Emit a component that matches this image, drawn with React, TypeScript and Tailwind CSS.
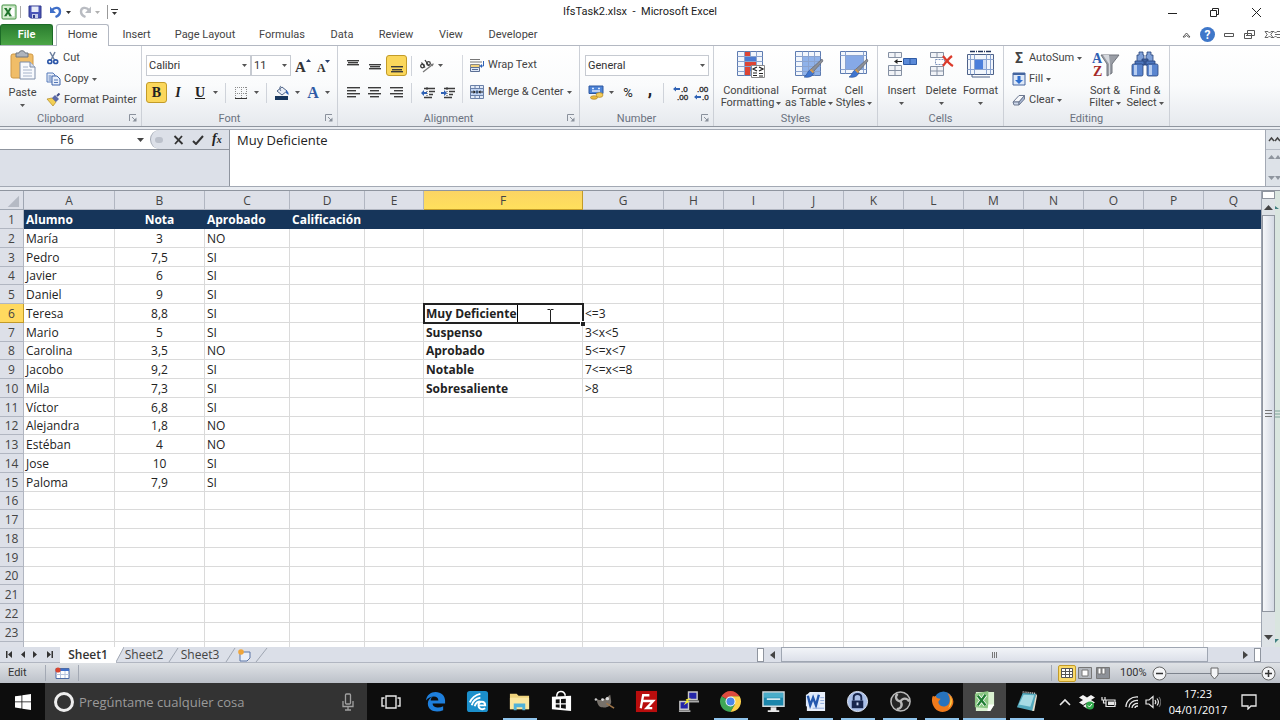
import type { ReactNode } from "react";
import clsx from "clsx";

interface RowData {
  cells: Record<string, string>;
}

const COLUMNS = [
  { name: "A", width: "w-[91px]" },
  { name: "B", width: "w-[90px]" },
  { name: "C", width: "w-[85px]" },
  { name: "D", width: "w-[75px]" },
  { name: "E", width: "w-[59px]" },
  { name: "F", width: "w-[159px]" },
  { name: "G", width: "w-[81px]" },
  { name: "H", width: "w-[60px]" },
  { name: "I", width: "w-[60px]" },
  { name: "J", width: "w-[60px]" },
  { name: "K", width: "w-[60px]" },
  { name: "L", width: "w-[60px]" },
  { name: "M", width: "w-[60px]" },
  { name: "N", width: "w-[60px]" },
  { name: "O", width: "w-[60px]" },
  { name: "P", width: "w-[60px]" },
  { name: "Q", width: "w-[60px]" },
];

const ROWS: RowData[] = [
  { cells: { A: "Alumno", B: "Nota", C: "Aprobado", D: "Calificación" } },
  { cells: { A: "María", B: "3", C: "NO" } },
  { cells: { A: "Pedro", B: "7,5", C: "SI" } },
  { cells: { A: "Javier", B: "6", C: "SI" } },
  { cells: { A: "Daniel", B: "9", C: "SI" } },
  { cells: { A: "Teresa", B: "8,8", C: "SI", F: "Muy Deficiente", G: "<=3" } },
  { cells: { A: "Mario", B: "5", C: "SI", F: "Suspenso", G: "3<x<5" } },
  { cells: { A: "Carolina", B: "3,5", C: "NO", F: "Aprobado", G: "5<=x<7" } },
  { cells: { A: "Jacobo", B: "9,2", C: "SI", F: "Notable", G: "7<=x<=8" } },
  { cells: { A: "Mila", B: "7,3", C: "SI", F: "Sobresaliente", G: ">8" } },
  { cells: { A: "Víctor", B: "6,8", C: "SI" } },
  { cells: { A: "Alejandra", B: "1,8", C: "NO" } },
  { cells: { A: "Estéban", B: "4", C: "NO" } },
  { cells: { A: "Jose", B: "10", C: "SI" } },
  { cells: { A: "Paloma", B: "7,9", C: "SI" } },
  ...Array.from({ length: 8 }, () => ({ cells: {} })),
];

const TABS = [
  { name: "Insert", width: "w-[55px]" },
  { name: "Page Layout", width: "w-[82px]" },
  { name: "Formulas", width: "w-[72px]" },
  { name: "Data", width: "w-[48px]" },
  { name: "Review", width: "w-[60px]" },
  { name: "View", width: "w-[50px]" },
  { name: "Developer", width: "w-[74px]" },
];

// ================================
// Small shared pieces
// ================================

function Arrow({ className = "text-[#555]" }: { className?: string }) {
  return (
    <svg viewBox="0 0 5 3" className={clsx("w-[5px] h-[3px] shrink-0", className)} fill="currentColor">
      <path d="M0 0h5L2.5 3z" />
    </svg>
  );
}

function Separator() {
  return <span className="w-px h-5 bg-[#cfd3da] shrink-0" />;
}

function Launcher() {
  return (
    <button aria-label="More options" className="absolute right-1 bottom-1">
      <svg viewBox="0 0 8 8" className="w-2 h-2" fill="none" stroke="#8a919c">
        <path d="M.5 7V.5H7M3 3l3 3" />
        <path d="M7.5 3.5v4h-4z" fill="#8a919c" stroke="none" />
      </svg>
    </button>
  );
}

interface GroupProps {
  label: string;
  width: string;
  launcher?: boolean;
  children: ReactNode;
}

function Group({ label, width, launcher, children }: GroupProps) {
  return (
    <section className={clsx("relative flex flex-col shrink-0 h-20 border-r border-[#ccd0d7]", width)}>
      <div className="flex-1 min-h-0">{children}</div>
      <h2 className={clsx("h-4 leading-[18px] text-center text-[#6a7280]", launcher && "pr-5")}>{label}</h2>
      {launcher && <Launcher />}
    </section>
  );
}

interface BigButtonProps {
  icon: ReactNode;
  lines: string[];
  width: string;
}

function BigButton({ icon, lines, width }: BigButtonProps) {
  return (
    <button className={clsx("flex flex-col items-center pt-1 shrink-0", width)}>
      {icon}
      <span className="mt-[7px] leading-3 whitespace-nowrap">{lines[0]}</span>
      <span className="flex items-center gap-0.5 h-3 leading-3 whitespace-nowrap">
        {lines[1]}
        <Arrow />
      </span>
    </button>
  );
}

interface SmallButtonProps {
  icon: ReactNode;
  label: string;
  arrow?: boolean;
}

function SmallButton({ icon, label, arrow }: SmallButtonProps) {
  return (
    <button className="flex items-center gap-[3px] h-5 whitespace-nowrap">
      {icon}
      <span className="pt-px">{label}</span>
      {arrow && <Arrow />}
    </button>
  );
}

interface ToolProps {
  label: string;
  width: string;
  active?: boolean;
  children: ReactNode;
}

function Tool({ label, width, active, children }: ToolProps) {
  return (
    <button
      aria-label={label}
      className={clsx(
        "flex items-center justify-center h-[21px] shrink-0",
        width,
        active && "rounded-[3px] border border-[#c29b29] bg-[#fbd75b]"
      )}
    >
      {children}
    </button>
  );
}

function Picker({ label, value, width }: { label: string; value: string; width: string }) {
  return (
    <span className={clsx("relative block shrink-0", width)}>
      <select
        aria-label={label}
        className="appearance-none w-full h-[21px] pl-0.5 pt-px bg-white border border-[#c6cad1] text-[#333]"
      >
        <option>{value}</option>
      </select>
      <Arrow className="absolute right-1 top-[9px] text-[#555]" />
    </span>
  );
}

// ================================
// Ribbon icons
// ================================

function SaveIcon() {
  return (
    <svg viewBox="0 0 14 14" className="w-3.5 h-3.5">
      <path d="M1 1h12v12H2.500L1 11.500z" fill="#4a55b8" stroke="#30398c" />
      <path d="M3.500 1.500h7V7h-7z" fill="#e8ecf8" />
      <path d="M4 9h6v4H4z" fill="#c6cdea" />
      <path d="M5 10h2v3H5z" fill="#30398c" />
    </svg>
  );
}

function CurlIcon({ className }: { className: string }) {
  return (
    <svg viewBox="0 0 14 14" className={clsx("w-[14px] h-[14px]", className)} fill="none" stroke="currentColor">
      <path d="M3 5c3-3.500 8-2.500 8 1.500 0 2.500-2 4.500-4.500 5.500" strokeWidth="2.400" />
      <path d="M1 1.500V8h6z" fill="currentColor" stroke="none" />
    </svg>
  );
}

function ExcelIcon() {
  return (
    <svg viewBox="0 0 16 16" className="w-4 h-4">
      <rect x="1" y="1" width="14" height="14" rx="1" fill="#d8efd2" stroke="#3f8f3f" />
      <path d="M9 3h5v10H9z" fill="#fff" stroke="#8cc08a" strokeWidth=".6" />
      <path d="M3 4h2.600L7 6.500 8.600 4h2.200L8.200 8l2.800 4.200H8.400L7 9.700l-1.600 2.500H3L5.800 8z" fill="#20742c" />
    </svg>
  );
}

function PasteIcon() {
  return (
    <svg viewBox="0 0 28 30" className="w-7 h-[30px]">
      <rect x="2" y="4" width="22" height="24" rx="2" fill="#f0bd68" stroke="#cf9845" />
      <path d="M7 3h3c0-3 6-3 6 0h3v4H7z" fill="#aeb4bd" stroke="#6f7680" />
      <path d="M11 12h10l5 5v12H11z" fill="#f7f9fd" stroke="#7d8ca8" />
      <path d="M21 12v5h5" fill="#d5ddeb" stroke="#7d8ca8" />
      <path d="M14 17h5M14 20h9M14 23h9M14 26h9" stroke="#a5b2c9" />
    </svg>
  );
}

function CutIcon() {
  return (
    <svg viewBox="0 0 14 14" className="w-3.5 h-3.5" fill="none">
      <path d="M4 1l4.500 8M9 1L5 9" stroke="#6c7f9e" strokeWidth="1.500" />
      <ellipse cx="3.800" cy="10.700" rx="2" ry="1.800" stroke="#2a55a8" strokeWidth="1.600" />
      <ellipse cx="9.700" cy="10.700" rx="2" ry="1.800" stroke="#2a55a8" strokeWidth="1.600" />
    </svg>
  );
}

function CopyIcon() {
  return (
    <svg viewBox="0 0 15 14" className="w-[15px] h-3.5">
      <path d="M1 1h6l2 2v7H1z" fill="#e9f0fb" stroke="#5578b8" />
      <path d="M6 4h5l3 3v6H6z" fill="#e9f0fb" stroke="#3d62a8" />
      <path d="M2.500 4h3M2.500 6h3M2.500 8h3M8 8h4M8 10.500h4" stroke="#5578b8" />
    </svg>
  );
}

function PainterIcon() {
  return (
    <svg viewBox="0 0 15 14" className="w-[15px] h-3.5">
      <path d="M1 6l5-1 4 4-3 4z" fill="#f2cf55" stroke="#b18a25" strokeWidth=".7" />
      <path d="M6 5l3-3 4 4-3 3z" fill="#5b6aa8" />
      <path d="M11 3l2.500-2.500" stroke="#434f86" strokeWidth="2" />
    </svg>
  );
}

function FontSizeIcon({ shrink }: { shrink?: boolean }) {
  return (
    <svg
      viewBox="0 0 16 16"
      className="w-4 h-4"
      fontFamily="Liberation Serif, serif"
      fontWeight="700"
      fontSize={shrink ? 12 : 15}
      fill="#333"
    >
      <text x={shrink ? 2 : 0} y="14">A</text>
      <path d={shrink ? "M10 2h5l-2.500 3z" : "M11 4h5l-2.500-3z"} fill="#27406e" />
    </svg>
  );
}

function BordersIcon() {
  return (
    <svg viewBox="0 0 14 14" className="w-3.5 h-3.5" stroke="#8c8c8c" strokeDasharray="1 1">
      <path d="M1 1.500h12M1 7.500h12M1.500 1v12M7.500 1v12M12.500 1v12" />
      <path d="M1 12.500h12" stroke="#333" strokeDasharray="none" />
    </svg>
  );
}

function FillColorIcon() {
  return (
    <svg viewBox="0 0 16 15" className="w-4 h-[15px]">
      <path d="M3 6l5-4 5 4-5 4z" fill="#e9eef7" stroke="#4f6487" />
      <path d="M7 1c-2 1-1 4 0 5" fill="none" stroke="#4f6487" />
      <path d="M12 5c2 1 3 3 2.500 5L12 8z" fill="#3567b8" />
      <path d="M1 11h13v4H1z" fill="#17365d" />
    </svg>
  );
}

interface LinesProps {
  rows: { x: number; y: number; w: number }[];
}

function Lines({ rows }: LinesProps) {
  return (
    <svg viewBox="0 0 14 14" className="w-3.5 h-3.5" fill="#3c3c3c">
      {rows.map((row) => (
        <rect key={row.y} x={row.x} y={row.y} width={row.w} height="1.4" />
      ))}
    </svg>
  );
}

function OrientationIcon() {
  return (
    <svg viewBox="0 0 16 14" className="w-4 h-3.5" fill="none" stroke="#3c3c3c" strokeWidth="1.300">
      <circle cx="3.500" cy="7" r="1.800" />
      <path d="M2.500 3.500l3.500 5M6 1l4 6" />
      <circle cx="9.500" cy="4.500" r="1.800" />
      <path d="M4 13l9-7" stroke="#777" />
      <path d="M15 4.500l-3.500.500 2 2.500z" fill="#777" stroke="none" />
    </svg>
  );
}

function IndentIcon({ flip }: { flip?: boolean }) {
  return (
    <svg viewBox="0 0 15 14" className="w-[15px] h-3.5">
      <path d="M3 2.500h11M8 5.500h6M8 8.500h4M3 11.500h8" stroke="#3c3c3c" strokeWidth="1.700" />
      <path d="M6 1v12" stroke="#3c3c3c" strokeDasharray="1 1" />
      <path d={flip ? "M0 6h3V4l3 3-3 3V8H0z" : "M6 6H3V4L0 7l3 3V8h3z"} fill="#2f62b5" />
    </svg>
  );
}

function WrapIcon() {
  return (
    <svg viewBox="0 0 16 16" className="w-4 h-4">
      <path d="M1 2.500h10M1 5h12" stroke="#777" strokeWidth="1.200" />
      <path d="M1.500 7.500h9v3h-9z" fill="#f3d27c" stroke="#888" />
      <path d="M1.500 10.500h9v4h-9z" fill="#dfe8f7" stroke="#5b6f95" />
      <path d="M3 12.500h6" stroke="#5b6f95" />
      <path d="M14.500 4v5H12" fill="none" stroke="#2f62b5" />
      <path d="M13 7v4l-2.500-2z" fill="#2f62b5" />
    </svg>
  );
}

function MergeIcon() {
  return (
    <svg viewBox="0 0 16 16" className="w-4 h-4">
      <path d="M1.500 1.500h13v13h-13z" fill="#e3ebf8" stroke="#6a80a8" />
      <path d="M6 1.500v3M10.500 1.500v3M6 11.500v3M10.500 11.500v3M1.500 4.500h13M1.500 11.500h13" stroke="#6a80a8" />
      <path d="M2 5h12v6H2z" fill="#c0d3f2" />
      <path d="M2 8h4M10 8h4" stroke="#222" />
      <path d="M4.500 6.200L7 8l-2.500 1.800zM11.500 6.200L9 8l2.500 1.800z" fill="#222" />
      <path d="M8 6.500v3" stroke="#17365d" strokeWidth="1.500" />
    </svg>
  );
}

function CurrencyIcon() {
  return (
    <svg viewBox="0 0 16 15" className="w-4 h-[15px]">
      <path d="M1 1h14v7.500H1z" fill="#4d83d6" stroke="#2c57a0" />
      <path d="M4 3.500h2M10 3.500h2M4 6h8" stroke="#dbe8ff" strokeWidth="1.400" />
      <ellipse cx="6" cy="12.500" rx="3.500" ry="1.800" fill="#eab93f" stroke="#a57714" strokeWidth=".6" />
      <ellipse cx="11.500" cy="10" rx="3.500" ry="2.400" fill="#f2cc5c" stroke="#a57714" strokeWidth=".6" />
    </svg>
  );
}

function DecimalIcon({ increase }: { increase?: boolean }) {
  return (
    <svg viewBox="0 0 16 16" className="w-4 h-4" fontFamily="Liberation Sans, sans-serif" fontSize="8" fill="#222" stroke="#222" strokeWidth=".3">
      <text x={increase ? 8 : 3} y="7">{increase ? ".0" : ".00"}</text>
      <text x={increase ? 4 : 8} y="15">{increase ? ".00" : ".0"}</text>
      <path d={increase ? "M0 4l3-2.500V3h4v2H3v1.500z" : "M0 12l3-2.500V11h4v2H3v1.500z"} fill="#2f62b5" stroke="none" />
    </svg>
  );
}

function GridBase({ fill }: { fill: string }) {
  return (
    <>
      <path d="M1.500 1.500h25v24h-25z" fill="#f2f6fc" stroke="#5d7bb0" />
      <path d="M8 6h18v19H8z" fill={fill} />
      <path d="M1.500 6.500h25M1.500 11.500h25M1.500 16.500h25M1.500 21.500h25M8.500 1.500v24M14.500 1.500v24M20.500 1.500v24" stroke="#8aa3cf" />
    </>
  );
}

function Brush() {
  return (
    <>
      <path d="M28 9L17 19l2.500 2.500L29 11z" fill="#8c8f96" stroke="#5a5d64" strokeWidth=".6" />
      <path d="M17 19l3 3c-1 5-6 6-10 5 3-1 3-6 7-8z" fill="#3f75cf" stroke="#2a4f95" strokeWidth=".6" />
      <path d="M16.500 19.500l3 3" stroke="#d59b4f" strokeWidth="2" />
    </>
  );
}

function ConditionalIcon() {
  return (
    <svg viewBox="0 0 30 28" className="w-[30px] h-7">
      <GridBase fill="#f2f6fc" />
      <path d="M9 2h5v4H9zM9 12h11v4H9z" fill="#dd4434" />
      <path d="M9 7h11v4H9zM9 17h6v4H9z" fill="#4b7bd2" />
      <path d="M9 17h5v8H9z" fill="#dd4434" />
      <path d="M15.500 15.500h13v12h-13z" fill="#fff" stroke="#888" />
      <path d="M21 17l-4 2 4 2M17 23h4M17 25.500h4M23 17l4 2-4 2M23 23.500h4M23 26h4" fill="none" stroke="#222" strokeWidth="1.200" />
    </svg>
  );
}

function TableStyleIcon() {
  return (
    <svg viewBox="0 0 30 28" className="w-[30px] h-7">
      <GridBase fill="#8fb2ea" />
      <Brush />
    </svg>
  );
}

function CellStyleIcon() {
  return (
    <svg viewBox="0 0 30 28" className="w-[30px] h-7">
      <path d="M1.500 1.500h26v22h-26z" fill="#f2f6fc" stroke="#5d7bb0" />
      <path d="M1.500 5.500h26M1.500 19.500h26M6.500 1.500v22M24.500 1.500v22" stroke="#8aa3cf" />
      <path d="M7 6h17v13H7z" fill="#86a9e6" />
      <Brush />
    </svg>
  );
}

function InsertCellsIcon() {
  return (
    <svg viewBox="0 0 30 28" className="w-[30px] h-7" fill="#f1f3f7" stroke="#8590a3">
      <path d="M1.500 2.500h13v5h-13zM8 2.500v5M1.500 15.500h13v10h-13zM8 15.500v10M1.500 20.500h13" />
      <path d="M16.500 8.500h13v6h-13z" fill="#5b8ad8" stroke="#2f5ba5" />
      <path d="M23 8.500v6" stroke="#2f5ba5" />
      <path d="M8 11.500h7" stroke="#222" />
      <path d="M7 11.500L10.500 9v5z" fill="#222" stroke="none" />
    </svg>
  );
}

function DeleteCellsIcon() {
  return (
    <svg viewBox="0 0 30 28" className="w-[30px] h-7" fill="#f1f3f7" stroke="#8590a3">
      <path d="M4.500 2.500h13v5h-13zM11 2.500v5M4.500 16.500h13v9h-13zM11 16.500v9M4.500 21h13" />
      <path d="M9.500 9.500h9v5h-9z" fill="none" stroke="#7d93bd" strokeDasharray="2 1" />
      <path d="M17 6c3 4 6 8 10 10M26 6c-4 3-6 6-9 10" fill="none" stroke="#dc3b2c" strokeWidth="2.200" />
    </svg>
  );
}

function FormatCellsIcon() {
  return (
    <svg viewBox="0 0 30 28" className="w-[30px] h-7">
      <path d="M4 1.500h22" stroke="#22345c" strokeDasharray="5 1 1 1" strokeWidth="1.500" />
      <path d="M1.500 4.500h26v20h-26z" fill="#f2f6fc" stroke="#4d6188" />
      <path d="M1.500 9.500h26M1.500 19.500h26M8.500 4.500v20M20.500 4.500v20M24.500 4.500v20M4.500 4.500v20" stroke="#8aa3cf" />
      <path d="M9 10h8v9H9z" fill="#4b7fdb" />
      <path d="M17 10h3v9h-3z" fill="#cddcf5" />
      <path d="M6 24v3h18" fill="none" stroke="#4d6188" />
    </svg>
  );
}

function FillDownIcon() {
  return (
    <svg viewBox="0 0 14 14" className="w-3.5 h-3.5">
      <path d="M1 1h12v12H1z" fill="#dfe9f8" stroke="#44659f" />
      <path d="M1 1h12v2H1z" fill="#44659f" />
      <path d="M5.500 4h3v4H11l-4 4-4-4h2.500z" fill="#2f6fd0" />
    </svg>
  );
}

function EraserIcon() {
  return (
    <svg viewBox="0 0 14 12" className="w-3.5 h-3">
      <path d="M1 8l6-6.500h5.500L7 8z" fill="#f7f8fb" stroke="#6c7890" />
      <path d="M1 8h6v3H2z" fill="#cfd9ec" stroke="#6c7890" />
      <path d="M7 8l5.500-6.500V5L7 11z" fill="#a9b8d3" stroke="#6c7890" />
    </svg>
  );
}

function SortIcon() {
  return (
    <svg viewBox="0 0 30 28" className="w-[30px] h-7" fontFamily="Liberation Serif, serif" fontWeight="700">
      <path d="M11 5h18l-7 9v9l-5 3V14z" fill="#9a9ea6" stroke="#70747c" />
      <path d="M13 5h6l1 9v11l-1 .5V14z" fill="#d5d8dd" />
      <text x="2" y="13" fontSize="14" fill="#2f5fb3">A</text>
      <text x="3" y="26" fontSize="14" fill="#a52828">Z</text>
    </svg>
  );
}

function FindIcon() {
  return (
    <svg viewBox="0 0 28 28" className="w-7 h-7" stroke="#274278" strokeWidth=".8">
      <path d="M8 2h4v3h1v7H6V5h2zM16 2h4v3h2v7h-7V5h1z" fill="#7fa0d8" />
      <path d="M11 9h6v6h-6z" fill="#3c5f9f" />
      <path d="M4 11h9v4H4zM15 11h9v4h-9z" fill="#4d76bd" />
      <rect x="1" y="14" width="11" height="12" rx="1.500" fill="#5a85cf" />
      <rect x="16" y="14" width="11" height="12" rx="1.500" fill="#5a85cf" />
      <path d="M3 15h3v10H3zM18 15h3v10h-3z" fill="#b7cdf0" stroke="none" />
    </svg>
  );
}

// ================================
// Window chrome
// ================================

function TitleBar() {
  return (
    <header className="grid grid-cols-[1fr_auto_1fr] items-center h-6 bg-white">
      <div className="flex items-center gap-[3px] pl-px">
        <ExcelIcon />
        <span className="w-px h-3 bg-[#aaa]" />
        <button aria-label="Save" className="ml-1"><SaveIcon /></button>
        <button aria-label="Undo" className="ml-1"><CurlIcon className="text-[#3f6fc9]" /></button>
        <Arrow className="text-[#333]" />
        <button aria-label="Redo" className="ml-1"><CurlIcon className="text-[#b9bcc2] -scale-x-100" /></button>
        <Arrow className="text-[#b0b0b0]" />
        <span className="w-px h-3.5 ml-1 bg-[#999]" />
        <button aria-label="Customize toolbar" className="flex flex-col items-center gap-0.5">
          <span className="w-[7px] h-px bg-[#333]" />
          <Arrow className="text-[#333]" />
        </button>
      </div>
      <h1 className="text-[11px] text-[#222]">IfsTask2.xlsx&nbsp; -&nbsp; Microsoft Excel</h1>
      <div className="flex justify-end gap-[31px] pr-[18px]">
        <button aria-label="Minimize">
          <svg viewBox="0 0 11 11" className="w-[11px] h-[11px]" stroke="#222"><path d="M1 6.500h9" /></svg>
        </button>
        <button aria-label="Restore">
          <svg viewBox="0 0 11 11" className="w-[11px] h-[11px]" fill="none" stroke="#222">
            <path d="M1.500 3.500h6v6h-6zM3.500 3V1.500h6v6H8" />
          </svg>
        </button>
        <button aria-label="Close">
          <svg viewBox="0 0 11 11" className="w-[11px] h-[11px]" stroke="#222"><path d="M1 1l9 9M10 1l-9 9" /></svg>
        </button>
      </div>
    </header>
  );
}

function TabBar() {
  return (
    <nav className="flex items-end h-[22px] bg-white border-b border-[#b3b8c2]">
      <button className="w-[53px] h-[21px] rounded-t-[3px] border border-b-0 border-[#1c6b27] bg-linear-to-b from-[#2a7d2f] to-[#4ba546] text-white font-semibold">
        File
      </button>
      <button className="w-[53px] h-[22px] ml-[3px] -mb-px rounded-t-[3px] border border-b-0 border-[#b3b8c2] bg-white">
        Home
      </button>
      {TABS.map((tab) => (
        <button key={tab.name} className={clsx("h-[21px] pt-0.5 shrink-0", tab.width)}>
          {tab.name}
        </button>
      ))}
      <div className="flex items-center gap-[9px] h-[21px] ml-auto">
        <svg viewBox="0 0 9 8" className="w-[9px] h-2" fill="none" stroke="#555"><path d="M1 6l3.500-4L8 6H6.500L4.500 4.500 2.500 6z" /></svg>
        <button aria-label="Help" className="flex items-center justify-center w-[15px] h-[15px] rounded-full bg-[#3f77c9] text-white text-xs font-bold">
          ?
        </button>
        <svg viewBox="0 0 11 8" className="w-[11px] h-2" fill="#fff" stroke="#555"><path d="M.5 2.500h9v3h-9z" /></svg>
        <svg viewBox="0 0 11 11" className="w-[11px] h-[11px]" fill="#fff" stroke="#555">
          <path d="M3.500 1.500h7v5h-7zM.5 4.500h7v5h-7z" />
          <path d="M2 6.500h4" />
        </svg>
        <svg viewBox="0 0 16 9" className="w-4 h-[9px]" fill="none" stroke="#666">
          <path d="M1 1.500h3l1.500 1.500L7 1.500h2L6.800 4.500 9 7.500H7L5.500 6 4 7.500H1l2.200-3zM9 1.500l1 0 1.500 1.500L13 1.500h3M9 7.500h1L11.500 6 13 7.500h3M11 4.500h5" />
        </svg>
      </div>
    </nav>
  );
}

function Ribbon() {
  return (
    <div className="flex h-[81px] bg-linear-to-b from-white via-[#fafbfc] to-[#e6e9ee] border-b border-[#8f959f] overflow-hidden">
      <Group label="Clipboard" width="w-[142px]" launcher>
        <div className="flex">
          <BigButton icon={<PasteIcon />} lines={["Paste"]} width="w-[45px]" />
          <div className="flex flex-col gap-px pt-0.5 pl-px">
            <SmallButton icon={<CutIcon />} label="Cut" />
            <SmallButton icon={<CopyIcon />} label="Copy" arrow />
            <SmallButton icon={<PainterIcon />} label="Format Painter" />
          </div>
        </div>
      </Group>

      <Group label="Font" width="w-[196px]" launcher>
        <div className="flex flex-col gap-1.5 pt-[9px] pl-1">
          <div className="flex">
            <Picker label="Font name" value="Calibri" width="w-[105px]" />
            <Picker label="Font size" value="11" width="w-10" />
            <span className="w-0.5" />
            <Tool label="Grow font" width="w-5"><FontSizeIcon /></Tool>
            <Tool label="Shrink font" width="w-5"><FontSizeIcon shrink /></Tool>
          </div>
          <div className="flex items-center font-['Liberation_Serif',serif] text-sm font-bold text-[#222]">
            <Tool label="Bold" width="w-[21px]" active>B</Tool>
            <Tool label="Italic" width="w-[22px]"><i>I</i></Tool>
            <Tool label="Underline" width="w-[22px]"><u>U</u></Tool>
            <Tool label="Underline styles" width="w-2"><Arrow /></Tool>
            <span className="w-1.5" />
            <Separator />
            <span className="w-1.5" />
            <Tool label="Borders" width="w-[18px]"><BordersIcon /></Tool>
            <Tool label="Border styles" width="w-3"><Arrow /></Tool>
            <span className="w-1" />
            <Separator />
            <span className="w-1.5" />
            <Tool label="Fill color" width="w-[18px]"><FillColorIcon /></Tool>
            <Tool label="Fill colors" width="w-3"><Arrow /></Tool>
            <Tool label="Font color" width="w-5"><span className="text-[#2f5ba5] text-base">A</span></Tool>
            <Tool label="Font colors" width="w-2"><Arrow /></Tool>
          </div>
        </div>
      </Group>

      <Group label="Alignment" width="w-[242px]" launcher>
        <div className="flex pt-[9px] pl-1">
          <div className="flex flex-col gap-1.5">
            <div className="flex items-center">
              <Tool label="Top align" width="w-[22px]">
                <Lines rows={[{ x: 1, y: 1, w: 12 }, { x: 2, y: 3, w: 10 }, { x: 1, y: 5, w: 12 }]} />
              </Tool>
              <Tool label="Middle align" width="w-[22px]">
                <Lines rows={[{ x: 1, y: 5, w: 12 }, { x: 2, y: 7, w: 10 }, { x: 1, y: 9, w: 12 }]} />
              </Tool>
              <Tool label="Bottom align" width="w-[21px]" active>
                <Lines rows={[{ x: 1, y: 7, w: 12 }, { x: 2, y: 10, w: 10 }, { x: 1, y: 12, w: 12 }]} />
              </Tool>
              <span className="w-1" />
              <Separator />
              <span className="w-1.5" />
              <Tool label="Orientation" width="w-[18px]"><OrientationIcon /></Tool>
              <Tool label="Orientation options" width="w-2"><Arrow /></Tool>
            </div>
            <div className="flex items-center">
              <Tool label="Align left" width="w-[22px]">
                <Lines rows={[{ x: 1, y: 1, w: 13 }, { x: 1, y: 4, w: 9 }, { x: 1, y: 7, w: 13 }, { x: 1, y: 10, w: 9 }]} />
              </Tool>
              <Tool label="Center" width="w-[22px]">
                <Lines rows={[{ x: 0, y: 1, w: 13 }, { x: 2, y: 4, w: 9 }, { x: 0, y: 7, w: 13 }, { x: 2, y: 10, w: 9 }]} />
              </Tool>
              <Tool label="Align right" width="w-[21px]">
                <Lines rows={[{ x: 0, y: 1, w: 13 }, { x: 4, y: 4, w: 9 }, { x: 0, y: 7, w: 13 }, { x: 4, y: 10, w: 9 }]} />
              </Tool>
              <span className="w-1" />
              <Separator />
              <span className="w-1.5" />
              <Tool label="Decrease indent" width="w-5"><IndentIcon /></Tool>
              <Tool label="Increase indent" width="w-5"><IndentIcon flip /></Tool>
            </div>
          </div>
          <span className="w-px h-12 ml-1 mr-1.5 bg-[#d5d8de]" />
          <div className="flex flex-col gap-[7px]">
            <SmallButton icon={<WrapIcon />} label="Wrap Text" />
            <SmallButton icon={<MergeIcon />} label="Merge & Center" arrow />
          </div>
        </div>
      </Group>

      <Group label="Number" width="w-[134px]" launcher>
        <div className="flex flex-col gap-1.5 pt-[9px] pl-[5px]">
          <Picker label="Number format" value="General" width="w-[124px]" />
          <div className="flex items-center text-[13px] text-[#222]">
            <Tool label="Accounting format" width="w-[22px]"><CurrencyIcon /></Tool>
            <Tool label="Currencies" width="w-2"><Arrow /></Tool>
            <Tool label="Percent" width="w-[26px]">%</Tool>
            <Tool label="Comma" width="w-[18px]"><span className="text-lg leading-3 font-bold pb-2">,</span></Tool>
            <span className="w-1" />
            <Separator />
            <span className="w-1.5" />
            <Tool label="Increase decimal" width="w-[21px]"><DecimalIcon increase /></Tool>
            <Tool label="Decrease decimal" width="w-[21px]"><DecimalIcon /></Tool>
          </div>
        </div>
      </Group>

      <Group label="Styles" width="w-[164px]">
        <div className="flex pl-1">
          <BigButton icon={<ConditionalIcon />} lines={["Conditional", "Formatting"]} width="w-[66px]" />
          <BigButton icon={<TableStyleIcon />} lines={["Format", "as Table"]} width="w-[50px]" />
          <BigButton icon={<CellStyleIcon />} lines={["Cell", "Styles"]} width="w-10" />
        </div>
      </Group>

      <Group label="Cells" width="w-[126px]">
        <div className="flex pl-1">
          <BigButton icon={<InsertCellsIcon />} lines={["Insert"]} width="w-[39px]" />
          <BigButton icon={<DeleteCellsIcon />} lines={["Delete"]} width="w-10" />
          <BigButton icon={<FormatCellsIcon />} lines={["Format"]} width="w-[39px]" />
        </div>
      </Group>

      <Group label="Editing" width="w-[166px]">
        <div className="flex pl-2">
          <div className="flex flex-col gap-px w-[73px] pt-0.5">
            <SmallButton icon={<span className="w-3.5 text-center font-bold text-sm">Σ</span>} label="AutoSum" arrow />
            <SmallButton icon={<FillDownIcon />} label="Fill" arrow />
            <SmallButton icon={<EraserIcon />} label="Clear" arrow />
          </div>
          <BigButton icon={<SortIcon />} lines={["Sort &", "Filter"]} width="w-10" />
          <BigButton icon={<FindIcon />} lines={["Find &", "Select"]} width="w-10" />
        </div>
      </Group>
    </div>
  );
}

function FormulaBar() {
  return (
    <div className="flex mt-0.5 h-[58px] border-y border-[#a3a9b4] bg-[#dce0e8]">
      <div className="w-[229px] shrink-0">
        <div className="flex items-center h-5 border-b border-[#8f959f] bg-white">
          <input
            aria-label="Name box"
            defaultValue="F6"
            className="w-[134px] h-full pt-px text-center text-xs text-[#333] outline-none"
          />
          <button aria-label="Names" className="flex items-center w-4 h-full pl-[3px]">
            <svg viewBox="0 0 7 4" className="w-[7px] h-1" fill="#444"><path d="M0 0h7L3.500 4z" /></svg>
          </button>
          <div className="flex items-center flex-1 h-full pl-1 gap-2 rounded-l-full border-l border-[#a3a9b4] bg-[#dce0e8]">
            <span className="w-2 h-1.5 mr-0.5 rounded-sm bg-[#bcc1cb]" />
            <button aria-label="Cancel">
              <svg viewBox="0 0 11 10" className="w-[11px] h-2.5" stroke="#333" strokeWidth="1.800"><path d="M1.500 1l8 8M9 1L2 9" /></svg>
            </button>
            <button aria-label="Enter">
              <svg viewBox="0 0 12 10" className="w-3 h-2.5" fill="none" stroke="#333" strokeWidth="2"><path d="M1 6l3 3 7-8" /></svg>
            </button>
            <button aria-label="Insert function" className="font-['Liberation_Serif',serif] font-bold italic text-sm leading-4 text-[#222]">
              f<span className="text-[10px]">x</span>
            </button>
          </div>
        </div>
      </div>
      <textarea
        aria-label="Formula"
        defaultValue="Muy Deficiente"
        className="flex-1 min-w-0 h-full pl-[7px] pt-px bg-white border-l border-[#8f959f] resize-none outline-none font-['Open_Sans',sans-serif] text-[13px] leading-[19px] text-[#222]"
      />
      <div className="flex flex-col items-center w-[15px] shrink-0 border-l border-[#a3a9b4] bg-[#dde2e8]">
        <svg viewBox="0 0 15 56" className="w-[15px] h-14">
          <path d="M0 19.500h15" stroke="#b6bcc6" />
          <path d="M3 11l2.500-3L8 11M9 11l2.500-3L14 11" fill="none" stroke="#444" strokeWidth="1.500" />
          <path d="M2 29l3.500-4L9 29zM9 29l3-4 3 4zM2 46l3.500 4L9 46zM9 46l3 4 3-4z" fill="#8e959e" />
        </svg>
      </div>
    </div>
  );
}

// ================================
// Worksheet
// ================================

function EditingCell({ text }: { text: string }) {
  return (
    <div className="relative">
      <span className="border-r border-black">{text}</span>
      <span className="absolute -left-[3px] -top-0.5 w-[161px] h-[21px] border-2 border-[#222]" />
      <span className="absolute left-[154px] top-4 w-[5px] h-[5px] bg-[#222] border-l border-t border-white" />
      <svg viewBox="0 0 7 14" className="absolute left-[121px] top-1 w-[7px] h-3.5" fill="none" stroke="#222">
        <path d="M.5.500H3l.5.500.5-.500h2.500M3.500 1v12M.5 13.500h6" />
      </svg>
    </div>
  );
}

function Sheet() {
  return (
    <div className="flex mt-[3px] border-t border-[#8f959f]">
      <div className="flex-1 min-w-0 overflow-hidden bg-white">
        <table className="table-fixed w-0 min-w-full border-separate border-spacing-0 font-['Open_Sans',sans-serif] text-xs text-[#222]">
          <colgroup>
            <col className="w-6" />
            {COLUMNS.map((col) => (
              <col key={col.name} className={col.width} />
            ))}
          </colgroup>
          <thead>
            <tr className="h-[19px] bg-[#dde0e8] text-[#444]">
              <th aria-label="Select all" className="p-0 border-r border-b border-[#9fa6b2]">
                <svg viewBox="0 0 24 18" className="block w-[23px] h-[17px]"><path d="M20 4v12H8z" fill="#b5bac4" /></svg>
              </th>
              {COLUMNS.map((col) => (
                <th
                  key={col.name}
                  scope="col"
                  className={clsx(
                    "px-0 pt-px pb-0 font-normal leading-[17px] border-r border-b",
                    col.name === "F"
                      ? "bg-linear-to-b from-[#fbd463] to-[#ffe05c] border-[#c29b29]"
                      : "border-[#b1b6c1]"
                  )}
                >
                  {col.name}
                </th>
              ))}
            </tr>
          </thead>
          <tbody>
            {ROWS.map((row, index) => {
              const number = index + 1;
              const isTitle = number === 1;
              return (
                <tr key={number} className="h-[19px] nth-[4n]:h-[18px]">
                  <th
                    scope="row"
                    className={clsx(
                      "p-0 font-normal leading-[17px] border-r border-b text-[#444]",
                      number === 6 ? "bg-[#ffd95f] border-[#c29b29]" : "bg-[#dde0e8] border-[#b1b6c1]"
                    )}
                  >
                    {number}
                  </th>
                  {COLUMNS.map((col) => {
                    const text = row.cells[col.name];
                    return (
                      <td
                        key={col.name}
                        className={clsx(
                          "py-0 leading-[17px] whitespace-nowrap border-r border-b",
                          isTitle ? "bg-[#16355a] border-[#16355a] text-white" : "border-[#dadada]",
                          col.name === "B" ? "px-0 text-center" : "pl-0.5 pr-0",
                          (isTitle || col.name === "F") && "font-bold"
                        )}
                      >
                        {number === 6 && col.name === "F" ? <EditingCell text={text} /> : text}
                      </td>
                    );
                  })}
                </tr>
              );
            })}
            <tr className="h-[5px]">
              <th aria-label="24" className="p-0 bg-[#dde0e8] border-r border-[#b1b6c1]" />
              {COLUMNS.map((col) => (
                <td key={col.name} className="p-0 border-r border-[#dadada]" />
              ))}
            </tr>
          </tbody>
        </table>
      </div>
      <div className="flex w-[19px] shrink-0 border-l border-[#9fa6b2] bg-[#dde2e6]">
        <div className="flex flex-col items-center w-[13px]">
          <span className="w-full h-2 border border-[#8f959f] bg-white" />
          <button aria-label="Scroll up" className="flex items-center justify-center h-4">
            <svg viewBox="0 0 9 5" className="w-[9px] h-[5px]" fill="#444"><path d="M0 5h9L4.500 0z" /></svg>
          </button>
          <div className="flex flex-col justify-center gap-0.5 flex-1 w-full px-0.5 border border-[#8f959f] bg-linear-to-r from-[#f4f6f9] to-[#d5dae4]">
            <span className="h-px bg-[#777]" />
            <span className="h-px bg-[#777]" />
            <span className="h-px bg-[#777]" />
          </div>
          <button aria-label="Scroll down" className="flex items-center justify-center h-[35px] pt-4">
            <svg viewBox="0 0 9 5" className="w-[9px] h-[5px]" fill="#444"><path d="M0 0h9L4.500 5z" /></svg>
          </button>
        </div>
        <svg viewBox="0 0 5 455" preserveAspectRatio="none" className="flex-1 min-w-0 h-full bg-[#d9e5df]" aria-hidden="true">
          <path d="M0 18l4 0-4-3zM0 447h4l-4 4z" fill="#3f7f80" />
          <path d="M0 219.500h5M0 222.500h5M0 225.500h5" stroke="#7fa39a" />
        </svg>
      </div>
    </div>
  );
}

function SheetTabs() {
  return (
    <div className="flex items-center h-4 border-b border-[#b1b6c1] bg-[#dbdfe8] font-['Open_Sans',sans-serif] text-xs text-[#444]">
      <svg viewBox="0 0 60 16" className="w-[60px] h-4 shrink-0" fill="#333">
        <path d="M6 4h1.500v7H6zM12 4v7L8 7.500zM25 4v7l-4-3.500zM33 4v7l4-3.500zM47 4v7l4-3.500zM51.500 4H53v7h-1.500z" />
      </svg>
      <button className="w-[56px] h-4 shrink-0 bg-white font-semibold text-[#333] leading-[15px]">Sheet1</button>
      <svg viewBox="0 0 8 16" className="w-2 h-4 shrink-0"><path d="M0 0h8L0 15z" fill="#fff" /><path d="M8 0L0 15" stroke="#9fa6b2" /></svg>
      <button className="w-10 h-4 leading-[15px]">Sheet2</button>
      <svg viewBox="0 0 16 16" className="w-4 h-4 shrink-0"><path d="M14 1L5 15" stroke="#9fa6b2" /></svg>
      <button className="w-10 h-4 leading-[15px]">Sheet3</button>
      <svg viewBox="0 0 50 16" className="w-[50px] h-4 shrink-0">
        <path d="M15 1L6 15M47 1L36 15" stroke="#9fa6b2" />
        <path d="M20 5h10v6l-3 3h-7z" fill="#eaf0fa" stroke="#5b74a5" />
        <circle cx="21" cy="5" r="2.800" fill="#f0a63c" />
      </svg>
      <div className="flex items-center ml-auto h-full">
        <span className="w-[7px] h-3.5 border border-[#8f959f] bg-white" />
        <button aria-label="Scroll left" className="flex items-center justify-center w-[17px]">
          <svg viewBox="0 0 5 8" className="w-[5px] h-2" fill="#444"><path d="M5 0v8L0 4z" /></svg>
        </button>
        <div className="flex items-center justify-center gap-px w-[427px] h-[15px] border border-[#9fa6b2] bg-linear-to-b from-[#f2f4f8] to-[#dce0e9]">
          <span className="w-px h-1.5 bg-[#777]" />
          <span className="w-px h-1.5 bg-[#777]" />
          <span className="w-px h-1.5 bg-[#777]" />
        </div>
        <button aria-label="Scroll right" className="flex items-center justify-end w-10">
          <svg viewBox="0 0 5 8" className="w-[5px] h-2" fill="#444"><path d="M0 0v8l5-4z" /></svg>
        </button>
        <span className="w-[7px] h-3.5 ml-1.5 mr-[19px] border border-[#8f959f] bg-white" />
      </div>
    </div>
  );
}

function StatusBar() {
  return (
    <footer className="flex items-center h-5 bg-linear-to-b from-[#dfe2e6] to-[#bcc1c9] text-[#333]">
      <span className="w-[45px] pl-2">Edit</span>
      <span className="w-px h-4 bg-[#a3a9b4]" />
      <button aria-label="Record macro" className="w-8 flex justify-center">
        <svg viewBox="0 0 15 13" className="w-[15px] h-[13px]">
          <path d="M1 1.500h13v10H1z" fill="#fff" stroke="#4c6ba6" />
          <path d="M1 2h13v2H1z" fill="#3f6fc9" />
          <path d="M1 7.500h13M5.500 4v7M10 4v7" stroke="#b8c5de" />
          <circle cx="3" cy="3" r="2.600" fill="#d8452f" />
        </svg>
      </button>
      <span className="w-px h-4 bg-[#a3a9b4]" />
      <div className="flex items-center ml-auto">
        <span className="w-px h-4 mr-1.5 bg-[#a3a9b4]" />
        <button aria-label="Normal view" className="flex items-center justify-center w-[18px] h-[17px] rounded-[2px] border border-[#c29b29] bg-[#fbdb6b]">
          <svg viewBox="0 0 12 10" className="w-3 h-2.5" fill="#fff" stroke="#555">
            <path d="M.5.500h11v9H.5zM.5 3.500h11M.5 6.500h11M4.500.500v9M8.500.500v9" />
          </svg>
        </button>
        <button aria-label="Page layout view" className="ml-0.5">
          <svg viewBox="0 0 14 12" className="w-3.5 h-3" fill="#b4b8be" stroke="#777"><path d="M.5.500h13v11H.5z" /><path d="M4 3h6v6H4z" fill="#fff" /></svg>
        </button>
        <button aria-label="Page break view" className="ml-1">
          <svg viewBox="0 0 14 12" className="w-3.5 h-3" fill="#8d9198" stroke="#777"><path d="M.5.500h13v11H.5z" /><path d="M2 1h3v6H2zM6 1h3v6H6z" fill="#fff" /></svg>
        </button>
        <span className="ml-2.5 w-8">100%</span>
        <button aria-label="Zoom out">
          <svg viewBox="0 0 15 15" className="w-[15px] h-[15px]" fill="#f4f5f7" stroke="#666"><circle cx="7.500" cy="7.500" r="6.500" /><path d="M4 7.500h7" stroke="#333" strokeWidth="1.500" /></svg>
        </button>
        <svg viewBox="0 0 94 14" className="w-[94px] h-3.5">
          <path d="M0 7.500h94" stroke="#7d838d" />
          <path d="M44 2h7v7l-3.500 4L44 9z" fill="#f4f5f7" stroke="#666" />
        </svg>
        <button aria-label="Zoom in" className="mr-1">
          <svg viewBox="0 0 15 15" className="w-[15px] h-[15px]" fill="#f4f5f7" stroke="#666"><circle cx="7.500" cy="7.500" r="6.500" /><path d="M4 7.500h7M7.500 4v7" stroke="#333" strokeWidth="1.500" /></svg>
        </button>
      </div>
    </footer>
  );
}

// ================================
// Desktop taskbar
// ================================

interface TaskApp {
  name: string;
  open?: boolean;
  active?: boolean;
  drawing: ReactNode;
}

const APPS: TaskApp[] = [
  {
    name: "Edge",
    drawing: <path d="M2 11C3 5 7 2 12 2c6 0 10 4 10 9v3H9c0 4 6 5.500 11 3v4c-7 3-16 1-16-7 0-3 2-6 5-7-1 1-2 2-2 4h8c0-6-9-5-13 0z" fill="#1e7fdc" />,
  },
  {
    name: "Screen share",
    drawing: (
      <>
        <rect x="1" y="1" width="22" height="22" rx="3" fill="#1b8fcb" />
        <path d="M4 13C6 8 10 5 15 4M6 16c1-4 4-7 9-8M9 17c1-3 3-5 6-5" fill="none" stroke="#fff" strokeWidth="2" />
        <path d="M13 16h7c0-5-7-5-7 0 0 4 4 5 7 3" fill="none" stroke="#fff" strokeWidth="2" />
      </>
    ),
  },
  {
    name: "Explorer",
    open: true,
    drawing: (
      <>
        <path d="M2 4h7l2 2h11v14H2z" fill="#eed27b" />
        <path d="M2 8h20v12H2z" fill="#fbe7a0" />
        <path d="M6 21v-7h12v7h-3v-3H9v3z" fill="#50b2d8" />
      </>
    ),
  },
  {
    name: "Store",
    drawing: (
      <>
        <path d="M2 7l20-1v16l-20-2z" fill="#fff" />
        <path d="M7 7c0-7 8-7 9-1" fill="none" stroke="#fff" strokeWidth="1.600" />
        <path d="M6 10l4-.300v4H6zM11.500 9.500l5-.500v4.700h-5zM6 15h4v3.500l-4-.500zM11.500 15h5v4.500l-5-.600z" fill="#111" />
      </>
    ),
  },
  {
    name: "GIMP",
    drawing: (
      <>
        <path d="M4 9c4 3 7 1 10-1l4-3 1 7c0 5-5 7-9 6-4 0-6-4-6-9z" fill="#77716a" />
        <circle cx="10" cy="10" r="1.500" fill="#ddd" />
        <circle cx="15" cy="9" r="1.800" fill="#ddd" />
        <circle cx="3" cy="10" r="1.300" fill="#ccc" />
        <path d="M14 14l8 5" stroke="#a0764a" strokeWidth="1.600" />
      </>
    ),
  },
  {
    name: "FileZilla",
    drawing: (
      <>
        <rect x="1" y="1" width="22" height="22" fill="#b90d0d" />
        <path d="M6 19L8.500 5.500H15M7.500 11.500h5M12 11.500h7L12 19h6" fill="none" stroke="#fff" strokeWidth="2.400" />
      </>
    ),
  },
  {
    name: "PuTTY",
    drawing: (
      <>
        <path d="M12 2h9v8h-9zM3 12h9v8H3z" fill="#2426a8" stroke="#c8c8c8" strokeWidth="1.500" />
        <path d="M11 12h12M2 22h12" stroke="#aaa" strokeWidth="2" />
        <path d="M15 8l-4 3 2 1-6 4 3-5-1-1z" fill="#f4ee2c" />
      </>
    ),
  },
  {
    name: "Chrome",
    open: true,
    drawing: (
      <>
        <path d="M12 12L2.500 6.500A11 11 0 0 1 21.500 6.500H12z" fill="#dd4b3e" />
        <path d="M12 12L2.500 6.500A11 11 0 0 0 12 23l4.800-8.300z" fill="#3fa757" />
        <path d="M12 12l4.800 2.700L12 23A11 11 0 0 0 21.500 6.500H12z" fill="#fcd04b" />
        <circle cx="12" cy="12" r="5.200" fill="#fff" />
        <circle cx="12" cy="12" r="4.200" fill="#4a86e8" />
      </>
    ),
  },
  {
    name: "Remote desktop",
    drawing: (
      <>
        <path d="M1 2h22v15H1z" fill="#1b86ab" stroke="#d5dde0" strokeWidth="1.500" />
        <path d="M2 3h20v5H2z" fill="#4aacc9" />
        <path d="M5 9.500h14" stroke="#fff" strokeWidth="1.500" />
        <path d="M9 18h6v3h3v2H6v-2h3z" fill="#e8e8e8" />
      </>
    ),
  },
  {
    name: "Word",
    open: true,
    drawing: (
      <>
        <path d="M6 2h16v20H3V5z" fill="#e9f0fb" />
        <path d="M2 5l14-3v17L2 17z" fill="#dce8fa" />
        <path d="M4 6l2.500 10L9.500 8l3 8L15.500 5" fill="none" stroke="#2458ad" strokeWidth="2.500" />
        <path d="M17 8h4M17 11h4M17 14h4M9 19h12" stroke="#90abdb" />
      </>
    ),
  },
  {
    name: "Password safe",
    open: true,
    drawing: (
      <>
        <circle cx="12" cy="12" r="10.500" fill="#a9bfe8" stroke="#e4ebf8" />
        <path d="M8 11V8c0-5 8-5 8 0v3" fill="none" stroke="#17264d" strokeWidth="2" />
        <path d="M6 11h12v8H6z" fill="#17264d" />
        <path d="M12 13v3" stroke="#c7d6f2" strokeWidth="2" />
      </>
    ),
  },
  {
    name: "OBS",
    open: true,
    drawing: (
      <>
        <circle cx="12" cy="12" r="10" fill="#242424" stroke="#b9b9b9" strokeWidth="1.600" />
        <path d="M12 12c-5-1-6-5-3-8M12 12c2-4 7-4 9 0M12 12c3 4 0 8-4 8" fill="none" stroke="#b9b9b9" strokeWidth="2.400" />
      </>
    ),
  },
  {
    name: "Firefox",
    open: true,
    drawing: (
      <>
        <circle cx="13" cy="11" r="9.500" fill="#2773bd" />
        <path d="M2 6c1 1 2 1 3 0 0 2 2 3 5 3-1 2-3 2-2 5 2 4 7 4 10 1 3-4 1-9-1-12 6 3 8 9 5 14-4 7-13 8-18 2C1 15 0 10 2 6z" fill="#ef7a1c" />
        <path d="M20 6c3 5 2 10-2 13 2-4 3-8 2-13z" fill="#fcd04b" />
      </>
    ),
  },
  {
    name: "Excel",
    open: true,
    active: true,
    drawing: (
      <>
        <path d="M3 2h19v14l-4 6H3z" fill="#d9f0d0" />
        <path d="M2 4l14-3v18L2 18z" fill="#8cc784" />
        <path d="M5 6l8 10M13 5L5 16" stroke="#fff" strokeWidth="4" />
        <path d="M5 6l8 10M13 5L5 16" stroke="#1f7d33" strokeWidth="2.400" />
        <path d="M16 15h6l-4 7h-3z" fill="#fff" />
      </>
    ),
  },
  {
    name: "Notepad",
    open: true,
    drawing: (
      <>
        <path d="M8 3l14 1-3 18-17-4z" fill="#54a9bd" />
        <path d="M9 5l11 .500-4 12L4 15z" fill="#a7dbe4" />
        <path d="M22 4l1 2-3 16h-2z" fill="#e6e0cf" />
        <path d="M8 2l14 1.500" stroke="#ddd" strokeWidth="1.500" strokeDasharray="1 1" />
      </>
    ),
  },
];

function Taskbar() {
  return (
    <div className="flex h-[37px] bg-[#0d0d0d] font-['Open_Sans',sans-serif] overflow-hidden">
      <button aria-label="Start" className="flex items-center justify-center w-[45px] shrink-0">
        <svg viewBox="0 0 16 16" className="w-4 h-4" fill="#fff">
          <path d="M0 2.300l6.500-.900v6.100H0zM7.300 1.300L16 0v7.500H7.300zM0 8.300h6.500v6.200L0 13.600zM7.300 8.300H16V16l-8.700-1.200z" />
        </svg>
      </button>
      <label className="flex items-center gap-1 w-[322px] shrink-0 pl-2 pr-3 bg-[#333]">
        <svg viewBox="0 0 22 22" className="w-[22px] h-[22px]" fill="none" stroke="#eee" strokeWidth="3"><circle cx="11" cy="11" r="8.500" /></svg>
        <input
          aria-label="Search"
          placeholder="Pregúntame cualquier cosa"
          className="flex-1 min-w-0 h-full bg-transparent outline-none text-[13px] placeholder:text-[#9a9a9a]"
        />
        <svg viewBox="0 0 14 18" className="w-3.5 h-[18px]" fill="none" stroke="#a0a0a0" strokeWidth="1.300">
          <rect x="4.500" y="1" width="5" height="10" rx="1" />
          <path d="M2 8v5.500h10V8M7 13.500V17M4 17h6" />
        </svg>
      </label>
      <button aria-label="Task view" className="flex items-center justify-center w-[47px] shrink-0">
        <svg viewBox="0 0 20 14" className="w-5 h-3.5" fill="none" stroke="#e8e8e8" strokeWidth="1.400">
          <path d="M5 1h10v12H5zM3.500 3H1v8h2.500M16.500 3H19v8h-2.500" />
        </svg>
      </button>
      <div className="grid grid-cols-15 w-[634px] shrink-0">
        {APPS.map((app) => (
          <button
            key={app.name}
            aria-label={app.name}
            className={clsx("flex flex-col items-center justify-between pt-[7px]", app.active && "bg-[#444]")}
          >
            <svg viewBox="0 0 24 24" className="w-[23px] h-[23px]">{app.drawing}</svg>
            <span className={clsx("h-0.5", app.open && "bg-[#8fc4ec]", app.active ? "w-full" : "w-[34px]")} />
          </button>
        ))}
      </div>
      <div className="flex items-center ml-auto text-[#e8e8e8] shrink-0">
        <svg viewBox="0 0 12 8" className="w-3 h-2" fill="none" stroke="currentColor" strokeWidth="1.600"><path d="M1 7l5-5 5 5" /></svg>
        <svg viewBox="0 0 16 16" className="w-4 h-4 ml-2">
          <path d="M4 1l4 2.500L12 1l4 2.500L12 6l4 2.500-4 2.500-4-2.500L4 11 0 8.500 4 6 0 3.500zM4 12l4-2.500 4 2.500-4 2.500z" fill="#f2f2f2" />
          <circle cx="11" cy="11.500" r="4" fill="#2fa84a" />
          <path d="M9 11.500l1.500 1.500 2.500-3" fill="none" stroke="#fff" />
        </svg>
        <svg viewBox="0 0 16 12" className="w-4 h-3 ml-1.5" fill="none" stroke="currentColor" strokeWidth="1.200">
          <path d="M5 4h9v6.500H5zM14.500 6v3M1 1v3h3V1M2.500 4v3H5" />
          <path d="M7 5.500h6v3.500H7z" fill="currentColor" stroke="none" />
        </svg>
        <svg viewBox="0 0 14 14" className="w-3.5 h-3.5 ml-2" fill="none" stroke="currentColor" strokeWidth="1.300">
          <path d="M1 12C1 6 6 1.500 13 2M4 12.500C4 8.500 8 5 13 5.500M7 13c0-2.500 3-5 6-4.500M10 13c0-1.500 1.500-2 3-2" />
        </svg>
        <svg viewBox="0 0 16 14" className="w-4 h-3.5 ml-1.5" fill="none" stroke="currentColor" strokeWidth="1.200">
          <path d="M1 5h3l4-3.500v11L4 9H1zM10 5c1 1.500 1 3 0 4M12 3.500c2 2.500 2 4.500 0 7" />
          <path d="M14 2c2.500 3.500 2.500 6.500 0 10" stroke="#666" />
        </svg>
        <time className="w-[74px] text-center text-[11px] leading-4 text-white">
          17:23
          <br />
          04/01/2017
        </time>
        <button aria-label="Notifications" className="ml-1.5 mr-[23px]">
          <svg viewBox="0 0 16 16" className="w-4 h-4" fill="none" stroke="currentColor" strokeWidth="1.300">
            <path d="M1 1h14v11h-5l-3 3v-3H1z" />
          </svg>
        </button>
      </div>
    </div>
  );
}

export default function App() {
  return (
    <div className="flex flex-col min-h-screen bg-[#e9ecf1] font-['Roboto','Noto_Sans',sans-serif] text-[11px] text-[#444] overflow-hidden">
      <TitleBar />
      <TabBar />
      <Ribbon />
      <FormulaBar />
      <Sheet />
      <SheetTabs />
      <StatusBar />
      <Taskbar />
    </div>
  );
}
